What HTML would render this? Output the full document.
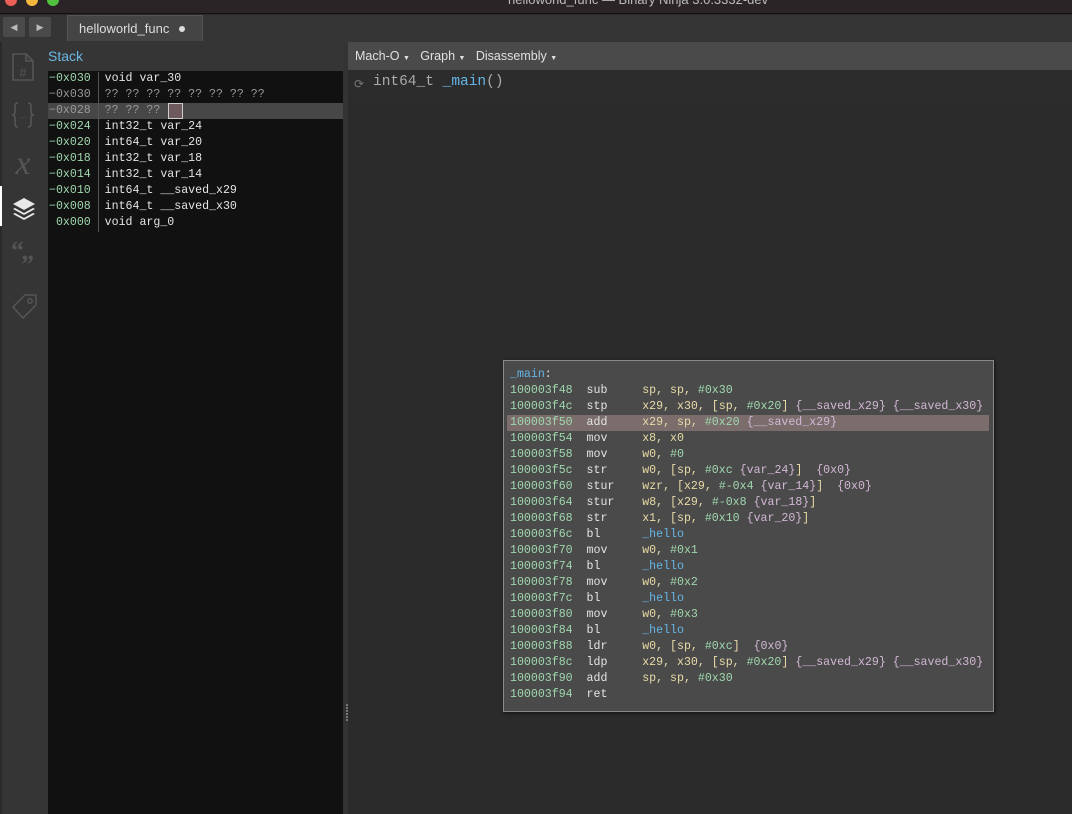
<!DOCTYPE html>
<html><head><style>
*{margin:0;padding:0;box-sizing:border-box}
body{width:1072px;height:814px;overflow:hidden;background:#2b2b2b;font-family:"Liberation Sans",sans-serif;position:relative}
.abs{position:absolute}
.mono{font-family:"Liberation Mono",monospace;font-size:11.6px;line-height:16px;white-space:pre}
.g{color:#a0d8ae}.w{color:#e4e4e4}.y{color:#e8dba6}.p{color:#d3b8d6}.b{color:#64b5e6}.d{color:#9a9a9a}
</style></head><body>
<div class="abs" style="left:0;top:0;width:1072px;height:14px;background:#2a2427;border-bottom:1px solid #111"></div>
<div class="abs" style="left:5px;top:-6px;width:12px;height:12px;border-radius:6px;background:#ec5f57"></div>
<div class="abs" style="left:26px;top:-6px;width:12px;height:12px;border-radius:6px;background:#f4b63f"></div>
<div class="abs" style="left:47px;top:-6px;width:12px;height:12px;border-radius:6px;background:#50c23f"></div>
<div class="abs" style="left:508px;top:-8px;color:#bbb;font-size:13px">helloworld_func — Binary Ninja 3.0.3332-dev</div>
<div class="abs" style="left:0;top:15px;width:1072px;height:27px;background:#353535"></div>
<div class="abs" style="left:3px;top:17px;width:22px;height:20px;background:#4a4a4a;border-radius:2px;color:#bbb;font-size:9px;text-align:center;line-height:20px">◀</div>
<div class="abs" style="left:29px;top:17px;width:22px;height:20px;background:#4a4a4a;border-radius:2px;color:#bbb;font-size:9px;text-align:center;line-height:20px">▶</div>
<div class="abs" style="left:67px;top:15px;width:136px;height:26px;background:#444;border:1px solid #555;border-bottom:none;color:#ddd;font-size:13px;line-height:26px;padding-left:11px">helloworld_func<span style="position:absolute;left:111px;top:10px;width:6px;height:6px;border-radius:3px;background:#ddd"></span></div>
<!-- sidebar -->
<div class="abs" style="left:0;top:42px;width:48px;height:772px;background:#353535;border-left:2px solid #2a2a2a"></div>
<div class="abs" style="left:0;top:186px;width:2px;height:40px;background:#fff"></div>
<svg class="abs" style="left:9px;top:50px" width="28" height="190" viewBox="0 0 28 190" fill="none" stroke="#555" stroke-width="1.6">
<path d="M4 4h13l7 7v19H4z M17 4v7h7"/><text x="14" y="27" fill="#555" stroke="none" font-size="13" text-anchor="middle" font-family="Liberation Sans">#</text>
<path d="M9 53c-3 0-3 2-3 5v4c0 2-1 3-3 3 2 0 3 1 3 3v4c0 3 0 5 3 5 M19 53c3 0 3 2 3 5v4c0 2 1 3 3 3-2 0-3 1-3 3v4c0 3 0 5-3 5"/><text x="14" y="68" fill="#555" stroke="none" font-size="9" text-anchor="middle">…</text>
<text x="14" y="124" fill="#555" stroke="none" font-size="34" font-style="italic" text-anchor="middle" font-family="Liberation Serif">x</text>
</svg>
<svg class="abs" style="left:11px;top:196px" width="26" height="26" viewBox="0 0 26 26" fill="#e8e8e8">
<path d="M13 2l11 6-11 6-11-6z"/><path d="M4 12l9 5 9-5 2 1-11 6-11-6z"/><path d="M4 17l9 5 9-5 2 1-11 6-11-6z"/></svg>
<div class="abs" style="left:11px;top:236px;color:#555;font-size:26px;font-family:'Liberation Serif',serif;font-weight:bold">“</div>
<div class="abs" style="left:21px;top:250px;color:#555;font-size:26px;font-family:'Liberation Serif',serif;font-weight:bold">”</div>
<svg class="abs" style="left:10px;top:292px" width="28" height="28" viewBox="0 0 28 28" fill="none" stroke="#555" stroke-width="1.5"><path d="M3 15L15 3h11v10L13 26z"/><circle cx="20" cy="9" r="2.2"/></svg>
<!-- stack panel -->
<div class="abs" style="left:48px;top:42px;width:295px;height:29px;background:#353535;color:#6cb8e4;font-size:14px;line-height:29px">Stack</div>
<div class="abs" style="left:48px;top:71px;width:295px;height:743px;background:#111"></div>
<div class="abs" style="left:48px;top:103px;width:295px;height:16px;background:#474747"></div>
<div class="abs" style="left:98px;top:72px;width:1px;height:160px;background:#555"></div>
<div class="abs" style="left:168px;top:103px;width:15px;height:16px;background:#6e5a5c;border:1px solid #ccc"></div>
<div class="abs mono" style="left:49px;top:71px"><span class="g">−0x030</span>  <span class="w">void var_30</span>
<span class="d">−0x030  ?? ?? ?? ?? ?? ?? ?? ??</span>
<span class="d">−0x028  ?? ?? ??</span>
<span class="g">−0x024</span>  <span class="w">int32_t var_24</span>
<span class="g">−0x020</span>  <span class="w">int64_t var_20</span>
<span class="g">−0x018</span>  <span class="w">int32_t var_18</span>
<span class="g">−0x014</span>  <span class="w">int32_t var_14</span>
<span class="g">−0x010</span>  <span class="w">int64_t __saved_x29</span>
<span class="g">−0x008</span>  <span class="w">int64_t __saved_x30</span>
<span class="g"> 0x000</span>  <span class="w">void arg_0</span></div>
<!-- splitter -->
<div class="abs" style="left:343px;top:42px;width:5px;height:772px;background:#333"></div>
<div class="abs" style="left:346px;top:704px;width:2px;height:18px;background:repeating-linear-gradient(#777 0 2px,transparent 2px 3px)"></div>
<!-- right pane -->
<div class="abs" style="left:348px;top:42px;width:724px;height:28px;background:#4a4a4a;color:#e0e0e0;font-size:12.5px;line-height:28px;padding-left:7px">Mach-O <span style="font-size:7px">▼</span>&nbsp;&nbsp; Graph <span style="font-size:7px">▼</span>&nbsp;&nbsp; Disassembly <span style="font-size:7px">▼</span></div>
<div class="abs" style="left:348px;top:70px;width:724px;height:28px;background:#2c2c2c"></div>
<div class="abs" style="left:354px;top:77px;color:#777;font-size:12px">⟳</div>
<div class="abs" style="left:373px;top:74px;font-family:'Liberation Mono',monospace;font-size:14.5px;color:#aaa">int64_t <span class="b">_main</span>()</div>
<!-- popup -->
<div class="abs" style="left:503px;top:360px;width:491px;height:352px;background:#4a4a4a;border:1px solid #8a8a8a;box-shadow:1px 1px 3px #111"></div>
<div class="abs" style="left:507px;top:415px;width:482px;height:16px;background:#7a6d6c"></div>
<div class="abs mono" style="left:510px;top:367px"><span class="b">_main</span><span class="w">:</span>
<span class="g">100003f48</span>  <span class="w">sub</span>     <span class="y">sp, sp, </span><span class="g">#0x30</span>
<span class="g">100003f4c</span>  <span class="w">stp</span>     <span class="y">x29, x30, [sp, </span><span class="g">#0x20</span><span class="y">]</span> <span class="p">{__saved_x29} {__saved_x30}</span>
<span class="g">100003f50</span>  <span class="w">add</span>     <span class="y">x29, sp, </span><span class="g">#0x20</span> <span class="p">{__saved_x29}</span>
<span class="g">100003f54</span>  <span class="w">mov</span>     <span class="y">x8, x0</span>
<span class="g">100003f58</span>  <span class="w">mov</span>     <span class="y">w0, </span><span class="g">#0</span>
<span class="g">100003f5c</span>  <span class="w">str</span>     <span class="y">w0, [sp, </span><span class="g">#0xc</span> <span class="p">{var_24}</span><span class="y">]</span>  <span class="p">{0x0}</span>
<span class="g">100003f60</span>  <span class="w">stur</span>    <span class="y">wzr, [x29, </span><span class="g">#-0x4</span> <span class="p">{var_14}</span><span class="y">]</span>  <span class="p">{0x0}</span>
<span class="g">100003f64</span>  <span class="w">stur</span>    <span class="y">w8, [x29, </span><span class="g">#-0x8</span> <span class="p">{var_18}</span><span class="y">]</span>
<span class="g">100003f68</span>  <span class="w">str</span>     <span class="y">x1, [sp, </span><span class="g">#0x10</span> <span class="p">{var_20}</span><span class="y">]</span>
<span class="g">100003f6c</span>  <span class="w">bl</span>      <span class="b">_hello</span>
<span class="g">100003f70</span>  <span class="w">mov</span>     <span class="y">w0, </span><span class="g">#0x1</span>
<span class="g">100003f74</span>  <span class="w">bl</span>      <span class="b">_hello</span>
<span class="g">100003f78</span>  <span class="w">mov</span>     <span class="y">w0, </span><span class="g">#0x2</span>
<span class="g">100003f7c</span>  <span class="w">bl</span>      <span class="b">_hello</span>
<span class="g">100003f80</span>  <span class="w">mov</span>     <span class="y">w0, </span><span class="g">#0x3</span>
<span class="g">100003f84</span>  <span class="w">bl</span>      <span class="b">_hello</span>
<span class="g">100003f88</span>  <span class="w">ldr</span>     <span class="y">w0, [sp, </span><span class="g">#0xc</span><span class="y">]</span>  <span class="p">{0x0}</span>
<span class="g">100003f8c</span>  <span class="w">ldp</span>     <span class="y">x29, x30, [sp, </span><span class="g">#0x20</span><span class="y">]</span> <span class="p">{__saved_x29} {__saved_x30}</span>
<span class="g">100003f90</span>  <span class="w">add</span>     <span class="y">sp, sp, </span><span class="g">#0x30</span>
<span class="g">100003f94</span>  <span class="w">ret</span></div>
</body></html>
